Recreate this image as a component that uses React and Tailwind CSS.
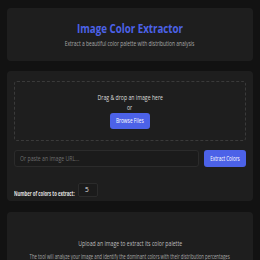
import React from "react";

function Sq({ className = "", children }) {
  return <span className={"inline-block whitespace-nowrap " + className}>{children}</span>;
}

export default function App() {
  return (
    <div className="h-screen overflow-hidden bg-[#121212] px-[7px] pt-[8px] font-['Open_Sans',sans-serif]">
      <div className="flex h-[53px] flex-col items-center justify-center rounded-[4px] bg-[#1e1e1e]">
        <Sq className="text-[12.5px] leading-[14px] font-bold text-[#4c62e8] scale-x-[0.78]">Image Color Extractor</Sq>
        <Sq className="mt-[4px] text-[7px] leading-[8px] text-[#a8a8a8] scale-x-[0.7]">
          Extract a beautiful color palette with distribution analysis
        </Sq>
      </div>

      <div className="mt-[10px] h-[130px] rounded-[4px] bg-[#1e1e1e] pl-[7px] pr-[7px] pt-[10px]">
        <div className="flex h-[60px] flex-col items-center justify-center rounded-[3px] border border-dashed border-[#3a3a3a]">
          <Sq className="text-[7px] leading-[9px] text-[#dcdcdc] scale-x-[0.74]">Drag &amp; drop an image here</Sq>
          <Sq className="mt-[1px] text-[7px] leading-[9px] text-[#dcdcdc] scale-x-[0.74]">or</Sq>
          <button className="mt-[1px] flex h-[16px] w-[40px] items-center justify-center rounded-[3px] bg-[#4c62e8]">
            <Sq className="text-[6.5px] leading-[8px] text-white scale-x-[0.74]">Browse Files</Sq>
          </button>
        </div>

        <div className="mt-[9px] flex h-[17px] gap-[5px]">
          <div className="flex flex-1 items-center overflow-hidden rounded-[3px] border border-[#2b2b2b] bg-[#1b1b1b] pl-[5px]">
            <Sq className="origin-left text-[7px] leading-[9px] text-[#6e6e6e] scale-x-[0.74]">Or paste an image URL...</Sq>
          </div>
          <button className="flex w-[42px] items-center justify-center rounded-[3px] bg-[#4c62e8]">
            <Sq className="text-[6.5px] leading-[8px] text-white scale-x-[0.7]">Extract Colors</Sq>
          </button>
        </div>

        <div className="mt-[11px] flex items-center">
          <div className="w-[64px] overflow-visible">
            <Sq className="origin-left text-[6.5px] leading-[8px] font-bold text-[#e0e0e0] scale-x-[0.66]">Number of colors to extract:</Sq>
          </div>
          <div className="flex h-[14px] w-[20px] items-center rounded-[2px] border border-[#2b2b2b] bg-[#1b1b1b] pl-[6px]">
            <span className="text-[6.5px] leading-[8px] text-[#e0e0e0]">5</span>
          </div>
        </div>
      </div>

      <div className="mt-[11px] flex h-[70px] flex-col items-center rounded-[4px] bg-[#1e1e1e] pt-[27px]">
        <Sq className="text-[7.5px] leading-[9px] text-[#bdbdbd] scale-x-[0.69]">Upload an image to extract its color palette</Sq>
        <Sq className="mt-[5px] text-[6.5px] leading-[8px] text-[#a8a8a8] scale-x-[0.66]">
          The tool will analyze your image and identify the dominant colors with their distribution percentages
        </Sq>
      </div>
    </div>
  );
}
